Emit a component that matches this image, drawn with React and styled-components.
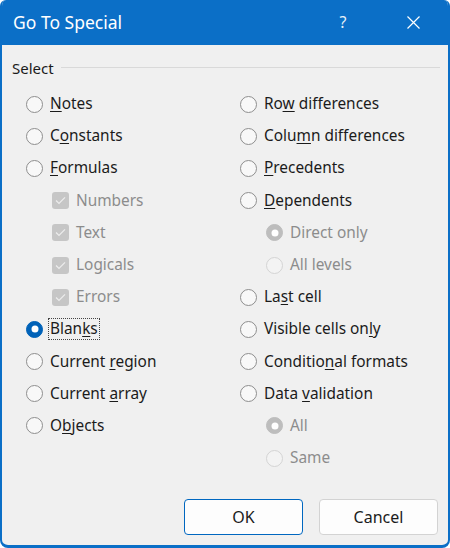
import React from 'react'
import styled, { createGlobalStyle } from 'styled-components'

const GlobalStyle = createGlobalStyle`
  html, body {
    margin: 0;
    padding: 0;
    background: #ffffff;
  }
  body {
    font-family: 'Noto Sans', 'Open Sans', sans-serif;
  }
`

const ACCENT = '#0b6fc7'

const leftOptions = [
  { label: 'Notes', key: 0 },
  { label: 'Constants', key: 1 },
  { label: 'Formulas', key: 0 },
  { label: 'Numbers', kind: 'check', sub: true, checked: true, disabled: true },
  { label: 'Text', kind: 'check', sub: true, checked: true, disabled: true },
  { label: 'Logicals', kind: 'check', sub: true, checked: true, disabled: true },
  { label: 'Errors', kind: 'check', sub: true, checked: true, disabled: true },
  { label: 'Blanks', key: 4, checked: true, focused: true },
  { label: 'Current region', key: 8 },
  { label: 'Current array', key: 8 },
  { label: 'Objects', key: 1 },
]

const rightOptions = [
  { label: 'Row differences', key: 2 },
  { label: 'Column differences', key: 4 },
  { label: 'Precedents', key: 0 },
  { label: 'Dependents', key: 0 },
  { label: 'Direct only', sub: true, checked: true, disabled: true },
  { label: 'All levels', sub: true, disabled: true },
  { label: 'Last cell', key: 2 },
  { label: 'Visible cells only', key: 16 },
  { label: 'Conditional formats', key: 8 },
  { label: 'Data validation', key: 5 },
  { label: 'All', sub: true, checked: true, disabled: true },
  { label: 'Same', sub: true, disabled: true },
]

const AccessText = ({ text, index }) => {
  if (index === undefined) return text
  return (
    <>
      {text.slice(0, index)}
      <u>{text[index]}</u>
      {text.slice(index + 1)}
    </>
  )
}

const Option = ({ option }) => (
  <Row $sub={option.sub}>
    {option.kind === 'check' ? (
      <CheckBox $disabled={option.disabled}>
        {option.checked && (
          <svg width="11" height="9" viewBox="0 0 11 9">
            <path d="M1 4.6 L4 7.4 L10 1.4" fill="none" stroke="#ececec" strokeWidth="1.3" />
          </svg>
        )}
      </CheckBox>
    ) : (
      <Radio $checked={option.checked} $disabled={option.disabled} />
    )}
    <OptionText $disabled={option.disabled} $focused={option.focused}>
      <AccessText text={option.label} index={option.key} />
    </OptionText>
  </Row>
)

export default function App() {
  return (
    <>
      <GlobalStyle />
      <Window>
        <TitleBar>
          <Title>Go To Special</Title>
          <HelpButton>?</HelpButton>
          <CloseButton>
            <svg width="13" height="13" viewBox="0 0 13 13">
              <path d="M0.5 0.5 L12.5 12.5 M12.5 0.5 L0.5 12.5" stroke="#ffffff" strokeWidth="1.2" />
            </svg>
          </CloseButton>
        </TitleBar>
        <Body>
          <Legend>
            <LegendText>Select</LegendText>
            <LegendLine />
          </Legend>
          <Columns>
            <Column>
              {leftOptions.map((o) => (
                <Option key={o.label} option={o} />
              ))}
            </Column>
            <Column>
              {rightOptions.map((o) => (
                <Option key={o.label} option={o} />
              ))}
            </Column>
          </Columns>
          <Footer>
            <Button $primary>OK</Button>
            <Button>Cancel</Button>
          </Footer>
        </Body>
      </Window>
    </>
  )
}

const Window = styled.div`
  width: 450px;
  height: 548px;
  box-sizing: border-box;
  display: flex;
  flex-direction: column;
  background: #f0f0f0;
  border: 2px solid ${ACCENT};
  border-top: none;
  border-bottom-width: 3px;
  border-radius: 6px 6px 8px 8px;
  overflow: hidden;
`

const TitleBar = styled.div`
  height: 45px;
  flex: none;
  display: flex;
  align-items: center;
  background: ${ACCENT};
  color: #ffffff;
  margin: 0 -2px;
  padding-left: 13px;
`

const Title = styled.div`
  flex: 1;
  font-size: 17.5px;
  padding-bottom: 1px;
`

const HelpButton = styled.div`
  width: 20px;
  text-align: center;
  font-size: 16px;
  margin-right: 54px;
  padding-bottom: 2px;
  opacity: 0.9;
`

const CloseButton = styled.div`
  display: flex;
  align-items: center;
  margin-right: 30px;
`

const Body = styled.div`
  flex: 1;
  display: flex;
  flex-direction: column;
  padding: 13px 8px 10px 10px;
`

const Legend = styled.div`
  display: flex;
  align-items: center;
  height: 20px;
`

const LegendText = styled.span`
  font-size: 15px;
  color: #1b1b1b;
  margin-right: 7px;
`

const LegendLine = styled.div`
  flex: 1;
  height: 1px;
  background: #d9d9d9;
  margin-top: -2px;
`

const Columns = styled.div`
  display: grid;
  grid-template-columns: 214px 1fr;
  padding-left: 14px;
  margin-top: 10px;
`

const Column = styled.div`
  display: flex;
  flex-direction: column;
`

const Row = styled.div`
  height: 32.2px;
  display: flex;
  align-items: center;
  padding-left: ${(p) => (p.$sub ? '26px' : '0')};
`

const Radio = styled.span`
  width: 17px;
  height: 17px;
  box-sizing: border-box;
  border-radius: 50%;
  flex: none;
  position: relative;
  border: 1px solid
    ${(p) => (p.$checked ? (p.$disabled ? '#bdbdbd' : '#0062b8') : p.$disabled ? '#d4d4d4' : '#8e8e8e')};
  background: ${(p) => (p.$checked ? (p.$disabled ? '#bdbdbd' : '#0062b8') : p.$disabled ? '#f3f3f3' : '#f8f8f8')};

  &::after {
    content: '';
    display: ${(p) => (p.$checked ? 'block' : 'none')};
    position: absolute;
    left: 50%;
    top: 50%;
    width: 7px;
    height: 7px;
    border-radius: 50%;
    background: #ffffff;
    transform: translate(-50%, -50%);
  }
`

const CheckBox = styled.span`
  width: 17px;
  height: 17px;
  border-radius: 3px;
  flex: none;
  display: flex;
  align-items: center;
  justify-content: center;
  background: ${(p) => (p.$disabled ? '#c6c6c6' : '#0062b8')};
`

const OptionText = styled.span`
  font-size: 15.4px;
  line-height: 20px;
  margin-left: ${(p) => (p.$focused ? '5px' : '7px')};
  padding: 0 ${(p) => (p.$focused ? '1px' : '0')};
  color: ${(p) => (p.$disabled ? '#8c8c8c' : '#1b1b1b')};
  border: ${(p) => (p.$focused ? '1px dotted #444' : 'none')};
  white-space: nowrap;

  u {
    text-underline-offset: 2px;
    text-decoration-thickness: 1px;
  }
`

const Footer = styled.div`
  margin-top: auto;
  display: flex;
  justify-content: flex-end;
  gap: 16px;
  padding-right: 2px;
`

const Button = styled.button`
  width: 119px;
  height: 36px;
  border-radius: 4px;
  background: #fdfdfd;
  border: 1px solid ${(p) => (p.$primary ? '#0067c0' : '#d3d3d3')};
  font-family: 'Noto Sans', 'Open Sans', sans-serif;
  font-size: 16px;
  color: #1b1b1b;
  padding: 0;
`
